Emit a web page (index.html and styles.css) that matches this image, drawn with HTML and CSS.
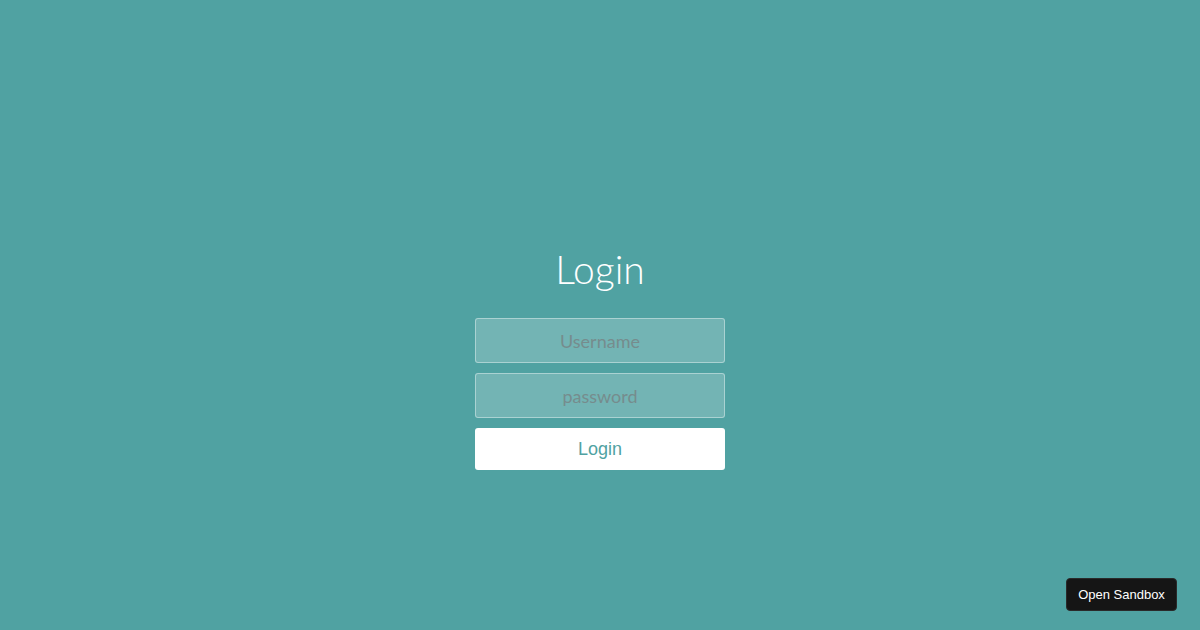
FILE: index.html
```html
<!DOCTYPE html>
<html lang="en">
<head>
<meta charset="utf-8">
<title>Login</title>
<link rel="stylesheet" href="styles.css">
</head>
<body>
<div class="page">
  <div class="container">
    <h1 class="title">Login</h1>
    <form class="form">
      <input class="field" type="text" placeholder="Username">
      <input class="field" type="password" placeholder="password">
      <button class="submit" type="button">Login</button>
    </form>
  </div>
  <a class="sandbox">Open Sandbox</a>
</div>
</body>
</html>
```
FILE: styles.css
```css
* { box-sizing: border-box; }
html, body { margin: 0; padding: 0; }
body {
  width: 1200px;
  height: 630px;
  background: #50a2a2;
  font-family: "Lato", "Open Sans", sans-serif;
  overflow: hidden;
}
.page {
  position: relative;
  height: 630px;
}
.container {
  display: flex;
  flex-direction: column;
  align-items: center;
  padding-top: 244px;
}
.title {
  margin: 0 0 24px;
  font-size: 39px;
  font-weight: 300;
  line-height: 50px;
  color: #ffffff;
}
.form {
  display: flex;
  flex-direction: column;
  align-items: center;
  gap: 10px;
  width: 250px;
}
.field {
  width: 250px;
  height: 45px;
  margin: 0;
  padding: 10px 15px;
  border: 1px solid rgba(255, 255, 255, 0.4);
  border-radius: 3px;
  background: rgba(255, 255, 255, 0.2);
  font-family: "Lato", "Open Sans", sans-serif;
  font-size: 18px;
  font-weight: 400;
  text-align: center;
  color: #ffffff;
  outline: none;
}
.field::placeholder {
  color: #768c8d;
  opacity: 1;
}
.submit {
  width: 250px;
  height: 42px;
  margin: 0;
  padding: 0 15px;
  border: 0;
  border-radius: 3px;
  background: #ffffff;
  color: #50a2a2;
  font-family: "Liberation Sans", Arial, sans-serif;
  font-size: 18px;
  cursor: pointer;
}
.sandbox {
  position: absolute;
  right: 23px;
  bottom: 19px;
  width: 111px;
  height: 33px;
  display: flex;
  align-items: center;
  justify-content: center;
  background: #151515;
  border: 1px solid #2a2a2a;
  border-radius: 4px;
  color: #ffffff;
  font-family: "Liberation Sans", Arial, sans-serif;
  font-size: 13px;
}
```
